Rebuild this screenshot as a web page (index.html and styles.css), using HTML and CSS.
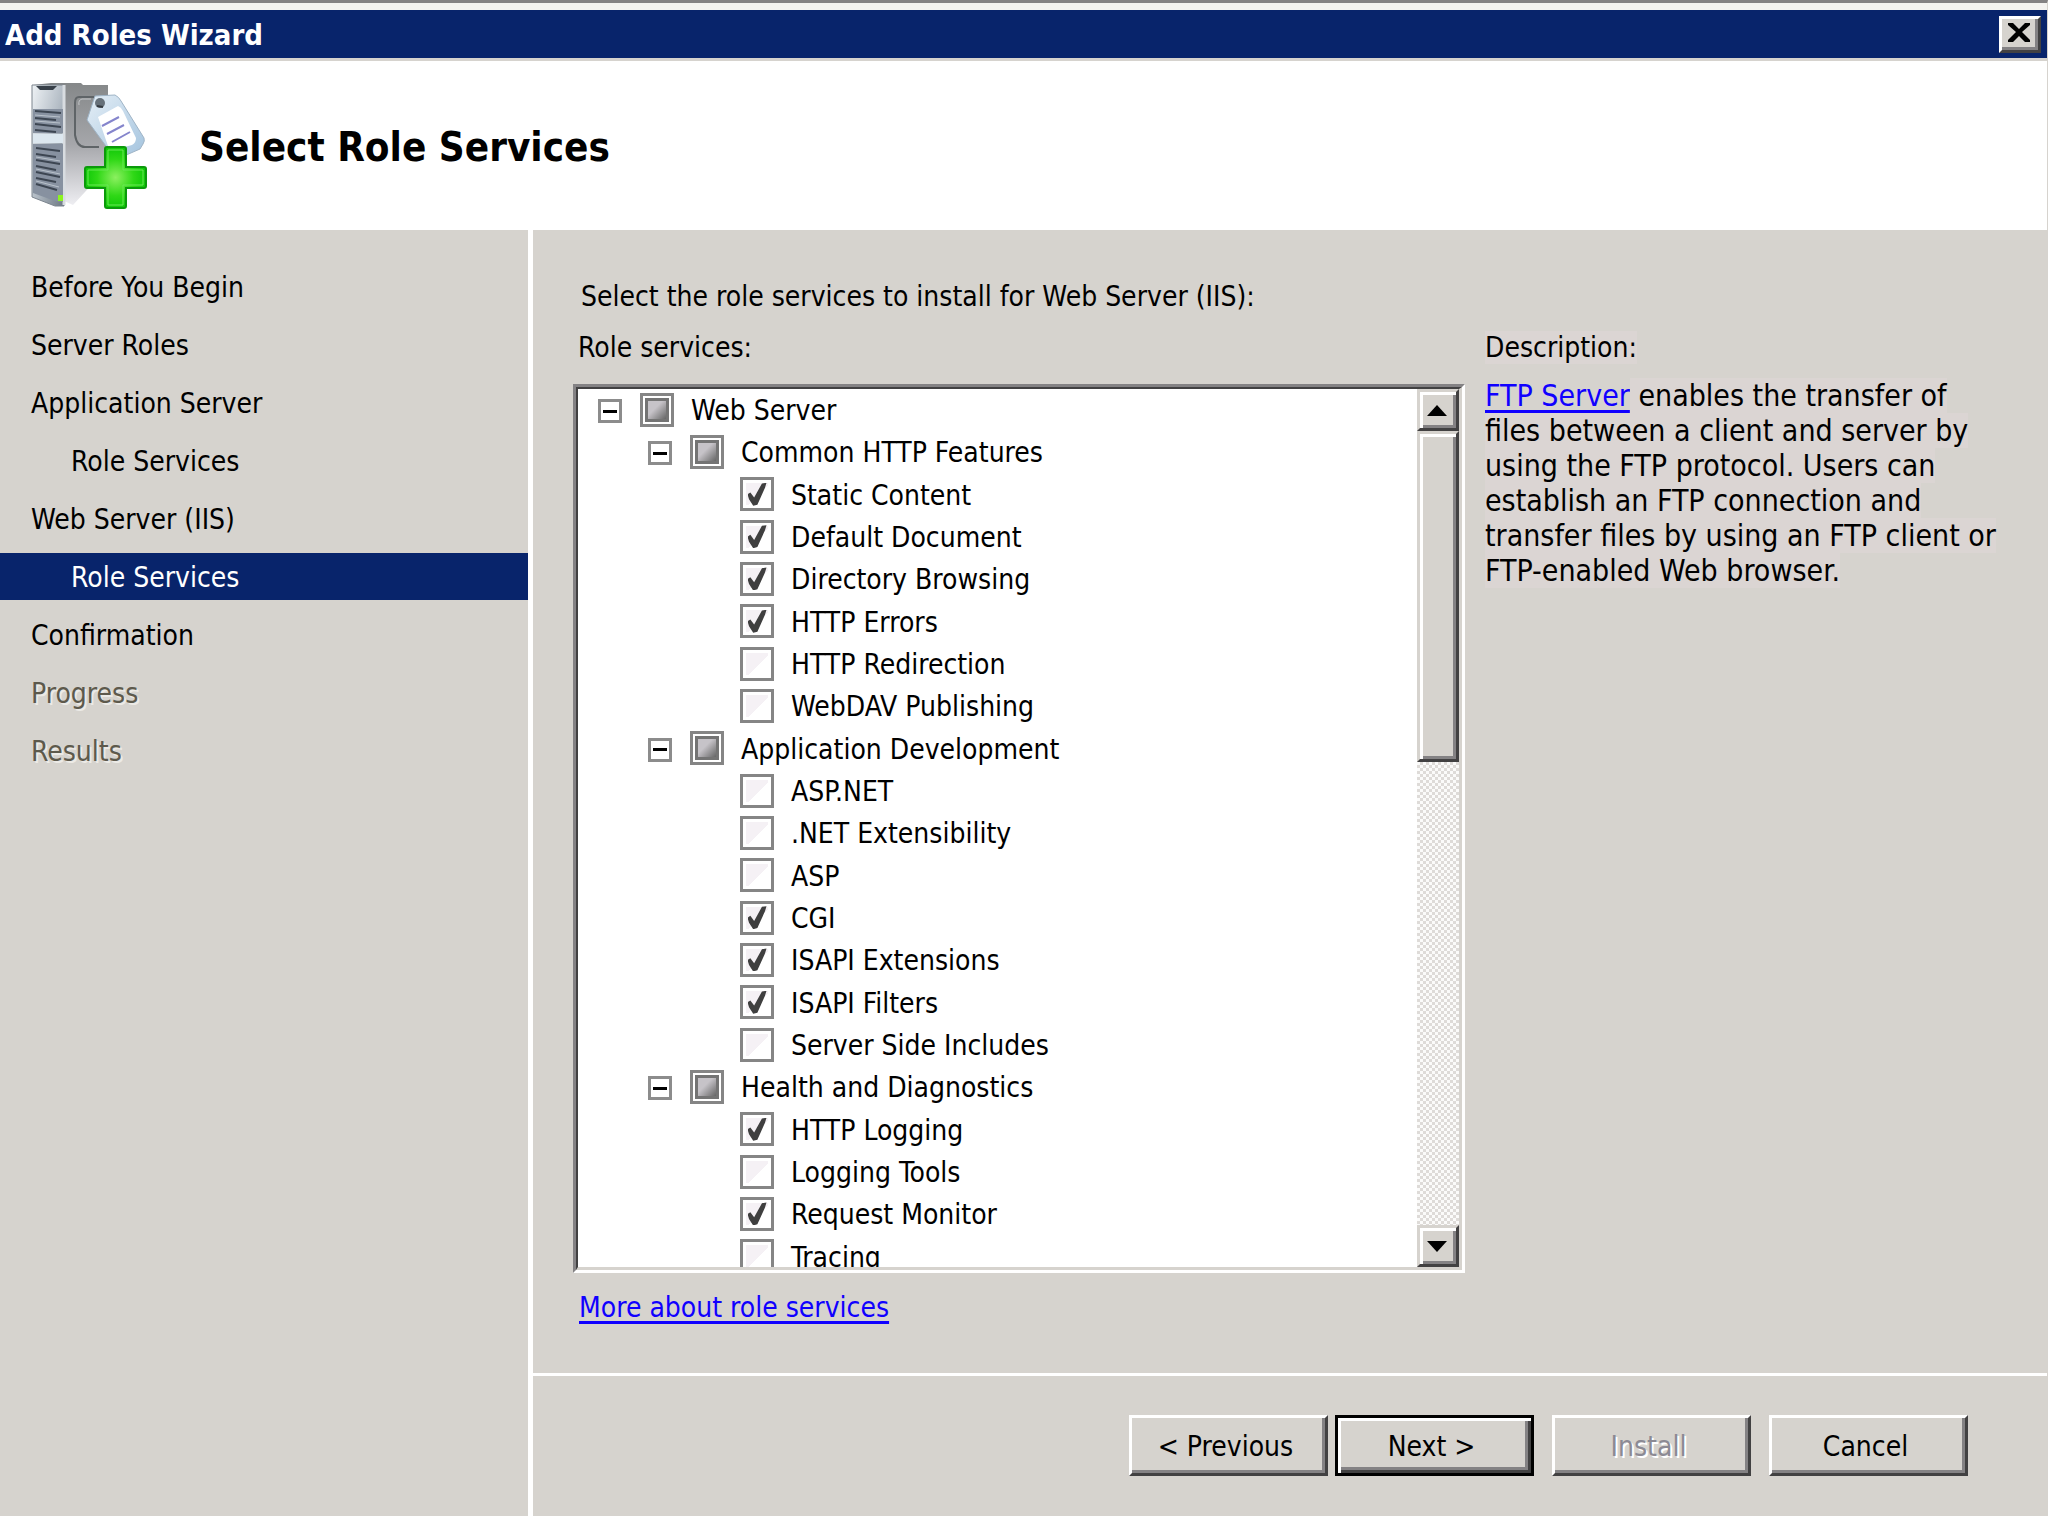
FILE: index.html
```html
<!DOCTYPE html>
<html lang="en">
<head>
<meta charset="utf-8">
<title>Add Roles Wizard</title>
<link rel="stylesheet" href="styles.css">
</head>
<body>
<div class="window">
  <div class="titlebar">
    <span class="titlebar-text">Add Roles Wizard</span>
    <button class="close" type="button" aria-label="Close">
      <svg width="22" height="19" viewBox="0 0 22 19"><path d="M0 0H5L11 6L17 0H22V2L14 9L22 17V19H17L11 13L5 19H0V17L8 9L0 2Z"/></svg>
    </button>
  </div>

  <header class="header">
    <svg class="header-icon" width="116" height="126" viewBox="0 0 116 126" aria-hidden="true">
      <defs>
        <linearGradient id="front" x1="0" y1="0" x2="1" y2="1"><stop offset="0" stop-color="#eef2f5"/><stop offset=".5" stop-color="#b4bdc6"/><stop offset="1" stop-color="#6d7883"/></linearGradient>
        <linearGradient id="side" x1="0" y1="0" x2="0" y2="1"><stop offset="0" stop-color="#858889"/><stop offset=".5" stop-color="#a5a6aa"/><stop offset="1" stop-color="#eeeef2"/></linearGradient>
        <linearGradient id="tag" x1="0" y1="0" x2="1" y2="1"><stop offset="0" stop-color="#e4eef6"/><stop offset="1" stop-color="#a3c3de"/></linearGradient>
        <radialGradient id="plus"><stop offset="0" stop-color="#8cf060"/><stop offset=".6" stop-color="#2fd816"/><stop offset="1" stop-color="#10c808"/></radialGradient>
      </defs>
      <path d="M2 2L20 0H50L52 2H77V84L42 122L33 118Z" fill="url(#side)"/>
      <path d="M1 2H33V123H24L1 114Z" fill="url(#front)" stroke="#7c858e"/>
      <path d="M33 2V122" stroke="#d8dce0" stroke-width="3"/>
      <path d="M5 3H26L22 7H9Z" fill="#384049"/>
      <path d="M2 26H32V50H2ZM2 61H32V119L24 118L2 110Z" fill="#8791a0"/>
      <path d="M2 51H32V60H2Z" fill="#dce7ef"/>
      <path d="M4 28L30 30M4 35L25 37M4 41L30 44M4 47L25 49M5 65L29 68M5 71L25 74M5 77L29 81M5 83L25 87M5 89L29 94M5 95L25 99M5 101L26 107" stroke="#3d4652" stroke-width="2"/>
      <path d="M4 32L29 34M4 38L29 40M5 74L29 78M5 86L29 91M5 98L28 104" stroke="#b9c2cb" stroke-width="1"/>
      <rect x="27" y="112" width="5" height="6" fill="#8cf51e"/>
      <path d="M64 14H48Q44 14 44 20V52Q46 64 54 64H68" fill="none" stroke="#5f6467" stroke-width="2"/>
      <path d="M60 16H51Q47 17 48 22" fill="none" stroke="#c2c5c7" stroke-width="1"/>
      <path d="M64 13L84 12Q88 14 90 18L113 55Q114 58 112 61L109 66L86 76L80 70L56 37Z" fill="url(#tag)" stroke="#9fb4c6"/>
      <path d="M67 34L87 23Q90 24 92 28L105 55Q105 60 101 62L82 67Q78 67 77 63Z" fill="#fff"/>
      <path d="M71 43L88 34M76 51L93 42M81 59L99 49" stroke="#8585cc" stroke-width="2"/>
      <circle cx="69" cy="20" r="5" fill="#667079"/><path d="M66 23L72 24" stroke="#343a40" stroke-width="2"/>
      <path d="M76 64H93Q95 64 95 66V84H113Q115 84 115 86V103Q115 105 113 105H95V123Q95 125 93 125H76Q74 125 74 123V105H56Q54 105 54 103V86Q54 84 56 84H74V66Q74 64 76 64Z" fill="url(#plus)" stroke="#0b9a0b" stroke-width="2"/>
      <path d="M77 67H92V87H112V102H92V122H77V102H57V87H77Z" fill="none" stroke="#6be857" stroke-width="1"/>
    </svg>
    <h1>Select Role Services</h1>
  </header>

  <div class="body">
    <nav class="steps">
      <ul>
        <li>Before You Begin</li>
        <li>Server Roles</li>
        <li>Application Server</li>
        <li class="sub">Role Services</li>
        <li>Web Server (IIS)</li>
        <li class="sub current" aria-current="step">Role Services</li>
        <li>Confirmation</li>
        <li class="pending">Progress</li>
        <li class="pending">Results</li>
      </ul>
    </nav>

    <main class="page">
      <div class="content">
        <p class="intro">Select the role services to install for Web Server (IIS):</p>
        <div class="columns">
          <section class="roles">
            <h2 id="roles-label">Role services:</h2>
            <div class="listbox">
              <div class="viewport">
                <ul class="tree" aria-labelledby="roles-label">
                  <li class="l1"><button class="expander" type="button" aria-label="Collapse Web Server"></button><label><input type="checkbox" class="mixed">Web Server</label></li>
                  <li class="l2"><button class="expander" type="button" aria-label="Collapse Common HTTP Features"></button><label><input type="checkbox" class="mixed">Common HTTP Features</label></li>
                  <li class="l3"><label><input type="checkbox" checked>Static Content</label></li>
                  <li class="l3"><label><input type="checkbox" checked>Default Document</label></li>
                  <li class="l3"><label><input type="checkbox" checked>Directory Browsing</label></li>
                  <li class="l3"><label><input type="checkbox" checked>HTTP Errors</label></li>
                  <li class="l3"><label><input type="checkbox">HTTP Redirection</label></li>
                  <li class="l3"><label><input type="checkbox">WebDAV Publishing</label></li>
                  <li class="l2"><button class="expander" type="button" aria-label="Collapse Application Development"></button><label><input type="checkbox" class="mixed">Application Development</label></li>
                  <li class="l3"><label><input type="checkbox">ASP.NET</label></li>
                  <li class="l3"><label><input type="checkbox">.NET Extensibility</label></li>
                  <li class="l3"><label><input type="checkbox">ASP</label></li>
                  <li class="l3"><label><input type="checkbox" checked>CGI</label></li>
                  <li class="l3"><label><input type="checkbox" checked>ISAPI Extensions</label></li>
                  <li class="l3"><label><input type="checkbox" checked>ISAPI Filters</label></li>
                  <li class="l3"><label><input type="checkbox">Server Side Includes</label></li>
                  <li class="l2"><button class="expander" type="button" aria-label="Collapse Health and Diagnostics"></button><label><input type="checkbox" class="mixed">Health and Diagnostics</label></li>
                  <li class="l3"><label><input type="checkbox" checked>HTTP Logging</label></li>
                  <li class="l3"><label><input type="checkbox">Logging Tools</label></li>
                  <li class="l3"><label><input type="checkbox" checked>Request Monitor</label></li>
                  <li class="l3"><label><input type="checkbox">Tracing</label></li>
                </ul>
              </div>
              <div class="scrollbar">
                <button class="arrow" type="button" aria-label="Scroll up"><svg width="20" height="11" viewBox="0 0 20 11"><path d="M0 11L10 0L20 11Z"/></svg></button>
                <div class="thumb"></div>
                <div class="track"></div>
                <button class="arrow" type="button" aria-label="Scroll down"><svg width="20" height="11" viewBox="0 0 20 11"><path d="M0 0H20L10 11Z"/></svg></button>
              </div>
            </div>
            <a class="more" href="#more">More about role services</a>
          </section>

          <section class="description">
            <h2><span>Description:</span></h2>
            <p><a href="#ftp">FTP Server</a><span> enables the transfer of files between a client and server by using the FTP protocol. Users can establish an FTP connection and transfer files by using an FTP client or FTP-enabled Web browser.</span></p>
          </section>
        </div>
      </div>

      <footer class="actions">
        <div class="pair">
          <button class="btn" type="button">&lt; Previous</button>
          <button class="btn default" type="button">Next &gt;</button>
        </div>
        <button class="btn" type="button" disabled>Install</button>
        <button class="btn" type="button">Cancel</button>
      </footer>
    </main>
  </div>
</div>
</body>
</html>
```
FILE: styles.css
```css
:root {
  --face: #d6d3ce;
  --navy: #08246b;
  --shadow: #848284;
  --dark: #424142;
  --link: #1000ff;
}

*, *::before { box-sizing: border-box; }

body {
  margin: 0;
  background: #fff;
  color: #000;
  font: 28px/36px "DejaVu Sans Condensed", "DejaVu Sans", Tahoma, sans-serif;
}

h1, h2, p, ul { margin: 0; padding: 0; }
h2 { font-size: 28px; font-weight: normal; }
ul { list-style: none; }
a { color: var(--link); text-decoration-thickness: 3px; text-underline-offset: 4px; text-decoration-skip-ink: none; }
button { font: inherit; color: inherit; padding: 0; background: var(--face); }

.window {
  border-top: 3px solid var(--shadow);
  border-right: 1px solid var(--face);
}

/* Title bar */
.titlebar {
  display: flex;
  align-items: center;
  justify-content: space-between;
  height: 58px;
  padding: 0 6px 0 5px;
  border-top: 7px solid #f4f3f1;
  border-bottom: 3px solid var(--face);
  background: var(--navy);
  color: #fff;
}
.titlebar-text { padding-top: 2px; font-size: 29px; font-weight: bold; }
.close {
  display: grid;
  place-items: center;
  width: 42px;
  height: 37px;
  padding: 0 3px 3px 0;
  border: 3px solid;
  border-color: #fff var(--dark) var(--dark) #fff;
  box-shadow: inset -3px -3px var(--shadow);
}

/* Header */
.header {
  display: flex;
  align-items: center;
  gap: 52px;
  min-height: 169px;
  padding: 0 31px;
}
h1 { padding-top: 2px; font-size: 40px; line-height: 48px; }

/* Wizard body */
.body {
  display: grid;
  grid-template-columns: 528px minmax(0, 1fr);
  gap: 5px;
}
.steps { background: var(--face); padding: 33px 0; }
.steps ul { display: grid; gap: 11px; }
.steps li { padding: 2px 0 0 31px; line-height: 45px; }
.steps .sub { padding-left: 71px; }
.steps .current { background: var(--navy); color: #fff; }
.steps .pending { color: #5d594c; text-shadow: 2px 2px #eceae6; }

.page { background: var(--face); }
.content { padding: 49px 0 47px 40px; }
.intro { padding-left: 8px; }
.columns {
  display: grid;
  grid-template-columns: minmax(0, 892fr) minmax(0, 562fr);
  gap: 20px;
  margin-top: 15px;
}
.roles h2 { padding-left: 5px; }
.more { display: inline-block; margin: 17px 0 0 6px; }

/* Role list */
.listbox {
  display: flex;
  height: 889px;
  margin-top: 18px;
  border: 3px solid;
  border-color: var(--shadow) #fff #fff var(--shadow);
  background: #fff;
}
.viewport {
  flex: 1;
  overflow: hidden;
  border: solid var(--dark);
  border-width: 2px 0 0 2px;
  border-bottom: 3px solid var(--face);
}
.tree { display: grid; grid-auto-rows: 1fr; height: 890px; padding-top: 1px; }
.tree li { display: flex; align-items: center; gap: 18px; white-space: nowrap; }
.tree label { display: flex; align-items: center; gap: 17px; }
.l1 { padding-left: 20px; }
.l2 { padding-left: 70px; }
.l3 { padding-left: 162px; }

.expander {
  display: grid;
  place-items: center;
  width: 24px;
  height: 24px;
  border: 3px solid #8c8c8c;
  background: #fff;
}
.expander::before { content: ""; width: 14px; height: 3px; background: #000; }

input {
  appearance: none;
  display: grid;
  place-items: center;
  width: 34px;
  height: 34px;
  margin: 0 0 3px;
  border: 3px solid #858585;
  background: linear-gradient(135deg, #f5f1f5 55%, #fff 55%) 3px 3px / 22px 22px no-repeat #fff;
}
input:checked::before {
  content: "";
  width: 19px;
  height: 23px;
  background: #3f3f3f;
  clip-path: polygon(0 50%, 15% 42%, 35% 64%, 76% 3%, 100% 0, 92% 22%, 52% 95%, 30% 100%, 8% 72%);
}
.mixed { background: #fff; }
.mixed::before {
  content: "";
  width: 24px;
  height: 24px;
  border: 3px solid #747474;
  background: linear-gradient(135deg, #c6c3c8 40%, #666 100%);
}

/* Scroll bar */
.scrollbar {
  display: flex;
  flex-direction: column;
  width: 45px;
  border-top: 2px solid var(--dark);
  border-right: 3px solid var(--face);
  border-bottom: 3px solid var(--face);
}
.arrow, .thumb {
  border: 3px solid;
  border-color: var(--face) var(--dark) var(--dark) var(--face);
  background: var(--face);
  box-shadow: inset 3px 3px #fff, inset -3px -3px var(--shadow);
}
.arrow { display: grid; place-items: center; height: 42px; flex: none; padding-right: 2px; }
.thumb { height: 331px; flex: none; }
.track {
  flex: 1;
  background: repeating-conic-gradient(#dedbd8 0 25%, #fbfbfa 0 50%) 0 0 / 6px 6px;
}

/* Description */
.description { padding-right: 40px; }
.description p { margin-top: 12px; font-size: 30px; line-height: 35px; }
.description span { background: #dbd5d3; }

/* Footer buttons */
.actions {
  display: flex;
  justify-content: flex-end;
  gap: 18px;
  padding: 39px 79px 40px;
  border-top: 3px solid #fff;
}
.pair { display: flex; gap: 7px; }
.btn {
  width: 199px;
  height: 61px;
  padding: 3px 6px 0 0;
  border: 3px solid;
  border-color: #fff var(--dark) var(--dark) #fff;
  box-shadow: inset -3px -3px var(--shadow);
}
.btn.default {
  border-color: #000;
  box-shadow: inset 3px 3px #fff, inset -3px -3px var(--dark), inset -6px -6px var(--shadow);
}
.btn:disabled { color: #8c8a94; text-shadow: 2px 2px #fff; }
```
